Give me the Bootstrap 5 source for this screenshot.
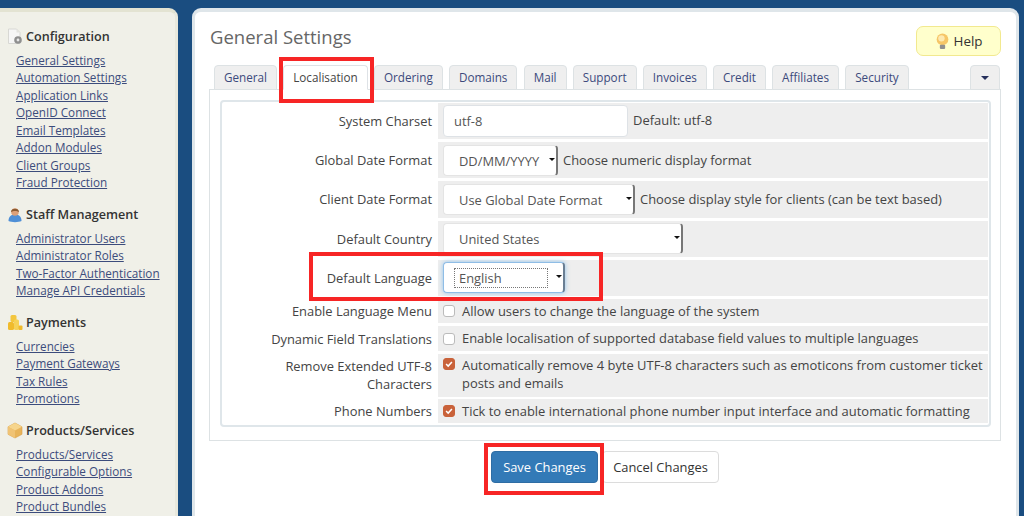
<!DOCTYPE html>
<html lang="en">
<head>
<meta charset="utf-8">
<title>General Settings</title>
<link href="https://cdn.jsdelivr.net/npm/bootstrap@5.3.0/dist/css/bootstrap.min.css" rel="stylesheet">
<style>
html,body{height:516px;overflow:hidden}
body{background:#1a4d80;font-family:"Open Sans","Liberation Sans",sans-serif;font-size:12.9px;color:#444;line-height:1.35;}
.shell{height:516px;padding-top:8px;gap:14px;overflow:hidden}
.side{width:178px;flex:none;background:#f0f0e8;border-top:4px solid #e3e3d2;border-right:3px solid #e8e8dc;border-radius:0 9px 0 0;padding:15px 0 0 7px;overflow:hidden}
.side-head{font-size:12.6px;font-weight:600;color:#333;height:19px;gap:3px;margin-bottom:5.6px;white-space:nowrap}
.side-head svg{width:16px;height:17px;flex:none}
.side-list{list-style:none;margin:0 0 13.4px;padding:0 0 0 9px}
.side-list li{height:17.5px;line-height:17.5px;font-size:11.7px;white-space:nowrap}
.side-list a{color:#3c4c7c;text-decoration:underline}
.panel{width:827px;flex:none;background:#fff;border-top:4px solid #dfe6ea;border-right:3px solid #dfe6ea;border-left:3px solid #dfe6ea;border-radius:9px 9px 0 0;padding:12px 15px 0 14px;position:relative;height:508px}
.page-title{font-size:18.5px;font-weight:400;color:#666;margin:0 0 0 1px;line-height:26px}
.help-btn{width:85px;height:30px;background:#ffffcc;border:1px solid #f2e98f;border-radius:7px;color:#333;font-size:13.400px;padding:1px 0 0;gap:4px;margin-top:2px}
.help-btn svg{width:15px;height:17px}
.tabs-row{margin-top:9px;height:24px;gap:6.2px;border:0;flex-wrap:nowrap;padding:0 1px 0 5px}
.tabs-row .nav-link{height:25px;padding:0 9px;line-height:23px;font-size:11.7px;color:#3c4a7c;background:#efefef;border:1px solid #dde2e4;border-bottom:1px solid #dde2e4;border-radius:4px 4px 0 0;white-space:nowrap}
.tabs-row .nav-link.active{background:#fff;color:#444;border-bottom-color:#fff;position:relative;z-index:1}
.tabs-row .more{margin-left:auto}
.tabs-row .more .nav-link{width:30px;padding:0;display:flex;align-items:center;justify-content:center}
.caret-dn{width:0;height:0;border:4px solid transparent;border-top-color:#26305c;border-bottom:0}
.tab-box{border:1px solid #dde2e4;height:352px;padding:10px 10px 0 10px;width:792px}
.cfg{border:2px solid #dfe6ea;border-radius:4px;padding:1px 1px;width:771px;height:327px}
.cfg-row{gap:3px;margin-bottom:3px;height:36.2px}
.cfg-row.low{height:24.400px}
.cfg-row.tall{height:43px}
.cfg-row:last-child{margin-bottom:0}
.cfg-label{width:212px;flex:none;text-align:right;padding-right:3px;color:#444;line-height:18px}
.cfg-val{flex:1;background:#eee;padding:0 2px 0 5px;gap:5px;color:#444;font-size:12.95px}
.low .chk-gap label{padding-top:1px}
.cfg-row.after-tall{margin-top:-1px}
.cfg-row.tall .chk-gap label{margin-top:-1px}
.ctl{height:32px;background:#fff;border:1px solid #dee2e6;border-radius:4px;font-size:12.9px;color:#555;padding:0 0 0 10px;line-height:30px;box-shadow:none}
.ctl.pick{height:31px;line-height:30px;padding-left:15px;position:relative;border-color:#e4e4e4 #777 #e4e4e4 #e4e4e4;border-right-width:2px}
.ctl.pick::after{content:"";position:absolute;right:1px;top:12px;width:0;height:0;border:3.500px solid transparent;border-top-color:#111;border-bottom:0}
.w-text{width:185px}
.w-date{width:115px}
.w-client{width:192px}
.w-country{width:240px}
.w-lang{width:122px;border:1px solid #8fbde6!important;border-right:2px solid #6a7f94!important;box-shadow:0 0 5px rgba(102,175,233,.7);padding-left:10px!important}
.lang-focus{display:block;width:94px;height:20px;line-height:18px;border:1px dotted #777;padding-left:4px;margin-top:5px}
.chk{width:12px;height:12px;flex:none;border:1px solid #bbb;border-radius:3px;background:#fff;margin:0 0 0 0;appearance:none;-webkit-appearance:none;display:block}
.chk:checked{background:#c9623a url("data:image/svg+xml,%3Csvg xmlns='http://www.w3.org/2000/svg' viewBox='0 0 12 12'%3E%3Cpath d='M2.5 6l2.5 2.5 4.5-5' fill='none' stroke='%23fff' stroke-width='1.8'/%3E%3C/svg%3E") center/contain no-repeat;border-color:#c9623a}
.chk-gap{gap:7px}
.actions{gap:4px;margin-top:10px;padding-left:282px}
.save-btn{width:107px;height:32px;background:#337ab7;border:1px solid #2e6da4;border-radius:4px;color:#fff;font-size:12.9px;padding:1px 0 0}
.cancel-btn{width:117px;height:32px;background:#fff;border:1px solid #dcdcdc;border-radius:4px;color:#333;font-size:12.9px;padding:1px 0 0}
.mark-box{position:absolute;border:4px solid #f72525;pointer-events:none;z-index:5}
.m1{left:84px;top:45px;width:95px;height:46px}
.m2{left:114px;top:240px;width:294px;height:49px}
.m3{left:289px;top:431px;width:120px;height:52px}
</style>
</head>
<body>
<div class="shell d-flex">
  <aside class="side">
    <div class="side-head d-flex align-items-center">
      <svg viewBox="0 0 16 17"><path d="M1.500 1h8l3.500 3.500V15.500h-11.500z" fill="#f6f6f6" stroke="#d8d8d4"/><path d="M9.500 1v3.500h3.500" fill="#e4e4e0"/><circle cx="11" cy="12" r="3.800" fill="#8f8f8f"/><circle cx="11" cy="12" r="1.400" fill="#e8e8e8"/></svg>
      <span>Configuration</span>
    </div>
    <ul class="side-list">
      <li><a href="#">General Settings</a></li><li><a href="#">Automation Settings</a></li><li><a href="#">Application Links</a></li><li><a href="#">OpenID Connect</a></li><li><a href="#">Email Templates</a></li><li><a href="#">Addon Modules</a></li><li><a href="#">Client Groups</a></li><li><a href="#">Fraud Protection</a></li>
    </ul>
    <div class="side-head d-flex align-items-center">
      <svg viewBox="0 0 16 17"><path d="M1.500 15c0-4.500 2.800-6.500 6.500-6.500s6.500 2 6.500 6.500c-3 1.500-10 1.500-13 0z" fill="#4f8fd6"/><circle cx="8" cy="6" r="3.800" fill="#dda078"/><path d="M4 6C3.800 1.500 12.200 1.500 12 6 10 4.500 6 4.500 4 6z" fill="#8a5a32"/></svg>
      <span>Staff Management</span>
    </div>
    <ul class="side-list">
      <li><a href="#">Administrator Users</a></li><li><a href="#">Administrator Roles</a></li><li><a href="#">Two-Factor Authentication</a></li><li><a href="#">Manage API Credentials</a></li>
    </ul>
    <div class="side-head d-flex align-items-center">
      <svg viewBox="0 0 16 17"><rect x="3.500" y="1" width="6" height="7" rx="1.500" fill="#f3c63e"/><rect x="1" y="8" width="6" height="8" rx="1.500" fill="#f0bb2c"/><rect x="7" y="5.500" width="5" height="10.500" rx="1.500" fill="#f6d257"/><rect x="11.500" y="11.500" width="4" height="4.500" rx="1" fill="#f0bb2c"/></svg>
      <span>Payments</span>
    </div>
    <ul class="side-list">
      <li><a href="#">Currencies</a></li><li><a href="#">Payment Gateways</a></li><li><a href="#">Tax Rules</a></li><li><a href="#">Promotions</a></li>
    </ul>
    <div class="side-head d-flex align-items-center">
      <svg viewBox="0 0 16 17"><path d="M8 1l7 3.800v7.500L8 16l-7-3.700V4.800z" fill="#e8b45a" stroke="#d9a046" stroke-width=".6"/><path d="M8 1l7 3.800L8 8.500 1 4.800z" fill="#f6d58c"/><path d="M8 8.500V16l-7-3.700V4.800z" fill="#f0c374"/></svg>
      <span>Products/Services</span>
    </div>
    <ul class="side-list">
      <li><a href="#">Products/Services</a></li><li><a href="#">Configurable Options</a></li><li><a href="#">Product Addons</a></li><li><a href="#">Product Bundles</a></li>
    </ul>
  </aside>
  <main class="panel">
    <div class="d-flex justify-content-between align-items-start">
      <h1 class="page-title">General Settings</h1>
      <button type="button" class="help-btn d-flex align-items-center justify-content-center">
        <svg viewBox="0 0 14 16"><circle cx="7" cy="6" r="5.500" fill="#f6c667"/><circle cx="6" cy="5" r="3" fill="#fde9b0"/><rect x="4.500" y="11" width="5" height="4" rx="1" fill="#8f8f8f"/></svg>
        <span>Help</span>
      </button>
    </div>
    <ul class="nav nav-tabs tabs-row">
      <li class="nav-item"><a class="nav-link" href="#">General</a></li>
      <li class="nav-item"><a class="nav-link active" href="#">Localisation</a></li>
      <li class="nav-item"><a class="nav-link" href="#">Ordering</a></li>
      <li class="nav-item"><a class="nav-link" href="#">Domains</a></li>
      <li class="nav-item"><a class="nav-link" href="#">Mail</a></li>
      <li class="nav-item"><a class="nav-link" href="#">Support</a></li>
      <li class="nav-item"><a class="nav-link" href="#">Invoices</a></li>
      <li class="nav-item"><a class="nav-link" href="#">Credit</a></li>
      <li class="nav-item"><a class="nav-link" href="#">Affiliates</a></li>
      <li class="nav-item"><a class="nav-link" href="#">Security</a></li>
      <li class="nav-item more"><a class="nav-link" href="#"><span class="caret-dn"></span></a></li>
    </ul>
    <div class="tab-box">
      <div class="cfg">
        <div class="cfg-row d-flex"><div class="cfg-label align-self-center">System Charset</div><div class="cfg-val d-flex align-items-center"><div class="ctl w-text">utf-8</div><span>Default: utf-8</span></div></div>
        <div class="cfg-row d-flex"><div class="cfg-label align-self-center">Global Date Format</div><div class="cfg-val d-flex align-items-center"><div class="ctl pick w-date">DD/MM/YYYY</div><span>Choose numeric display format</span></div></div>
        <div class="cfg-row d-flex"><div class="cfg-label align-self-center">Client Date Format</div><div class="cfg-val d-flex align-items-center"><div class="ctl pick w-client">Use Global Date Format</div><span>Choose display style for clients (can be text based)</span></div></div>
        <div class="cfg-row d-flex"><div class="cfg-label align-self-center">Default Country</div><div class="cfg-val d-flex align-items-center"><div class="ctl pick w-country">United States</div></div></div>
        <div class="cfg-row d-flex"><div class="cfg-label align-self-center">Default Language</div><div class="cfg-val d-flex align-items-center"><div class="ctl pick w-lang"><span class="lang-focus">English</span></div></div></div>
        <div class="cfg-row low d-flex"><div class="cfg-label align-self-center">Enable Language Menu</div><div class="cfg-val d-flex align-items-center chk-gap"><input class="chk" type="checkbox" id="c1"><label for="c1">Allow users to change the language of the system</label></div></div>
        <div class="cfg-row low d-flex"><div class="cfg-label align-self-center">Dynamic Field Translations</div><div class="cfg-val d-flex align-items-center chk-gap"><input class="chk" type="checkbox" id="c2"><label for="c2">Enable localisation of supported database field values to multiple languages</label></div></div>
        <div class="cfg-row tall d-flex"><div class="cfg-label align-self-center">Remove Extended UTF-8 Characters</div><div class="cfg-val d-flex align-items-center chk-gap"><input class="chk align-self-start mt-1" type="checkbox" id="c3" checked><label for="c3">Automatically remove 4 byte UTF-8 characters such as emoticons from customer ticket posts and emails</label></div></div>
        <div class="cfg-row low after-tall d-flex"><div class="cfg-label align-self-center">Phone Numbers</div><div class="cfg-val d-flex align-items-center chk-gap"><input class="chk" type="checkbox" id="c4" checked><label for="c4">Tick to enable international phone number input interface and automatic formatting</label></div></div>
      </div>
    </div>
    <div class="actions d-flex">
      <button type="button" class="save-btn">Save Changes</button>
      <button type="button" class="cancel-btn">Cancel Changes</button>
    </div>
    <div class="mark-box m1"></div>
    <div class="mark-box m2"></div>
    <div class="mark-box m3"></div>
  </main>
</div>
<script src="https://cdn.jsdelivr.net/npm/bootstrap@5.3.0/dist/js/bootstrap.bundle.min.js"></script>
</body>
</html>
